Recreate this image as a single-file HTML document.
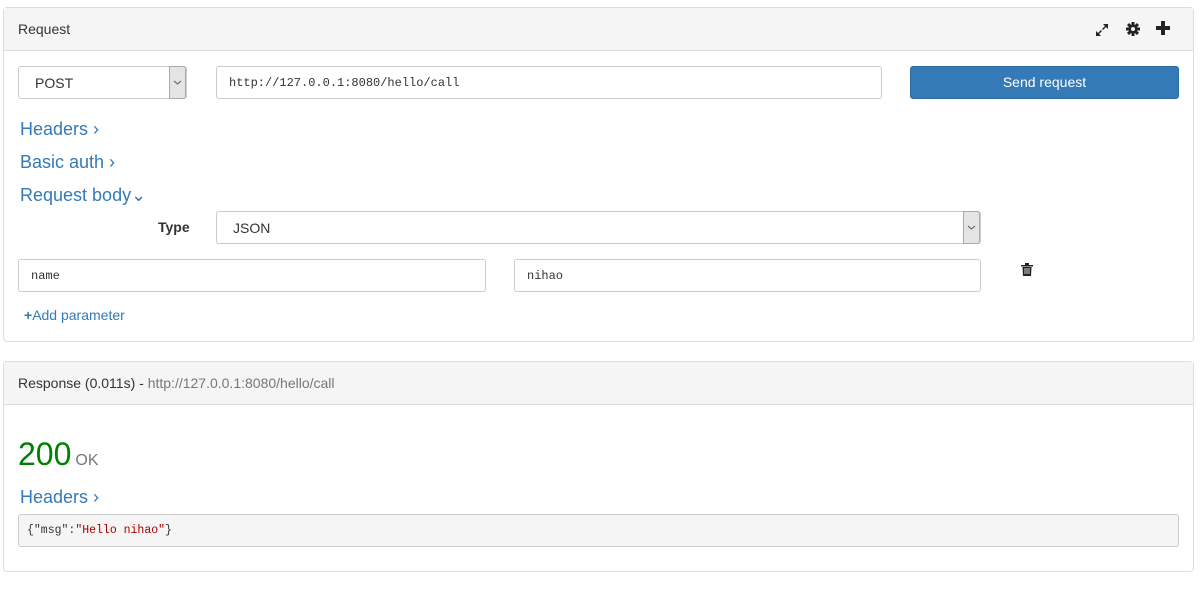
<!DOCTYPE html>
<html><head><style>
*{box-sizing:border-box}
body{margin:0;background:#fff;font-family:"Liberation Sans",sans-serif;font-size:14px;color:#333;width:1200px;height:598px;position:relative;overflow:hidden}
.p{position:absolute;left:3px;width:1191px;border:1px solid #ddd;border-radius:4px;background:#fff}
.h{background:#f5f5f5;border-bottom:1px solid #ddd;height:43px;padding:0 14px;line-height:42px;font-size:14px}
.a{position:absolute}
.box{position:absolute;border:1px solid #ccc;border-radius:3px;background:#fff;height:33px}
.mono{font-family:"Liberation Mono",monospace;font-size:12px}
.lk{position:absolute;color:#337ab7;font-size:18px;left:16px}
.sel{position:absolute;right:0;top:-1px;bottom:-1px;width:17px;background:#e4e4e4;border:1px solid #aaa;border-radius:0 3px 3px 0}
</style></head><body>
<div class="p" style="top:7px;height:335px">
<div class="h">Request</div>
<svg class="a" style="left:1090px;top:14px" width="16" height="16" viewBox="0 0 16 16"><path d="M9 2h5v5l-2-2-3 3-1-1 3-3zM7 14H2V9l2 2 3-3 1 1-3 3z" fill="#222"/></svg>
<svg class="a" style="left:1121px;top:13px" width="16" height="16" viewBox="0 0 16 16"><g fill="#222"><circle cx="8" cy="8" r="4.5"/><rect x="6.5" y="1" width="3" height="14"/><rect x="1" y="6.5" width="14" height="3"/><rect x="6.5" y="1" width="3" height="14" transform="rotate(45 8 8)"/><rect x="6.5" y="1" width="3" height="14" transform="rotate(-45 8 8)"/></g><circle cx="8" cy="8" r="2" fill="#f5f5f5"/></svg>
<svg class="a" style="left:1152px;top:13px" width="14" height="14" viewBox="0 0 14 14"><path d="M5 0h4v5h5v4H9v5H5V9H0V5h5z" fill="#222"/></svg>
<div class="box" style="left:14px;top:58px;width:169px"><span class="a" style="left:16px;top:8px">POST</span><div class="sel"><svg width="15" height="31"><path d="M4 14l3.5 3 3.5-3" fill="none" stroke="#555"/></svg></div></div>
<div class="box mono" style="left:212px;top:58px;width:666px"><span class="a" style="left:12px;top:9px">http://127.0.0.1:8080/hello/call</span></div>
<div class="a" style="left:906px;top:58px;width:269px;height:33px;background:#337ab7;border:1px solid #2e6da4;border-radius:3px;color:#fff;text-align:center;line-height:31px">Send request</div>
<div class="lk" style="top:111px">Headers ›</div>
<div class="lk" style="top:144px">Basic auth ›</div>
<div class="lk" style="top:177px">Request body⌄</div>
<div class="a" style="left:154px;top:211px;font-weight:bold">Type</div>
<div class="box" style="left:212px;top:203px;width:765px"><span class="a" style="left:16px;top:8px">JSON</span><div class="sel"><svg width="15" height="31"><path d="M4 14l3.5 3 3.5-3" fill="none" stroke="#555"/></svg></div></div>
<div class="box mono" style="left:14px;top:251px;width:468px"><span class="a" style="left:12px;top:9px">name</span></div>
<div class="box mono" style="left:510px;top:251px;width:467px"><span class="a" style="left:12px;top:9px">nihao</span></div>
<svg class="a" style="left:1017px;top:255px" width="12" height="13" viewBox="0 0 12 13"><path d="M0 2h12v1.5H0zM4 0h4v2H4zM1.5 4h9l-.5 9H2z" fill="#222"/><path d="M4 5v6M6 5v6M8 5v6" stroke="#fff" stroke-width=".8"/></svg>
<div class="a" style="left:20px;top:299px;color:#337ab7"><b>+</b>Add parameter</div>
</div>
<div class="p" style="top:361px;height:211px">
<div class="h">Response (0.011s) - <span style="color:#777">http://127.0.0.1:8080/hello/call</span></div>
<div class="a" style="left:14px;top:74px;font-size:32px;color:#008000">200<span style="font-size:16px;color:#777;margin-left:4px">OK</span></div>
<div class="lk" style="top:125px">Headers ›</div>
<div class="a mono" style="left:14px;top:152px;width:1161px;height:33px;background:#f5f5f5;border:1px solid #ccc;border-radius:3px;padding:9px 8px;font-size:11.5px">{"msg":<span style="color:#a00">"Hello nihao"</span>}</div>
</div>
</body></html>
